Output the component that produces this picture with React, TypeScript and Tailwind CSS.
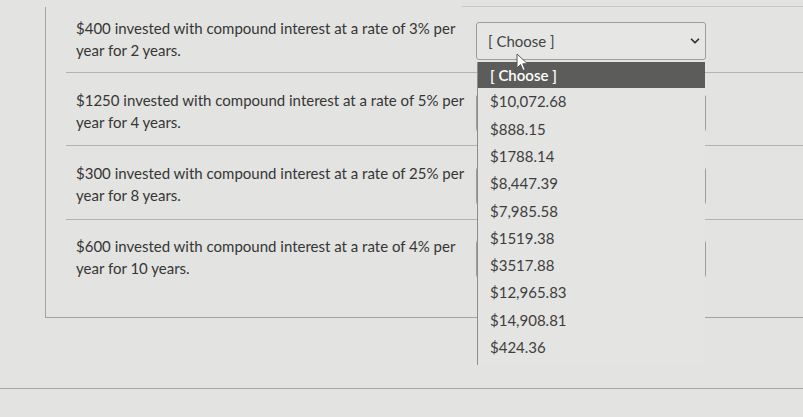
import { ChevronDown } from 'lucide-react';

const rows = [
  { l1: '$400 invested with compound interest at a rate of 3% per', l2: 'year for 2 years.', h: 'h-[66px] pt-[10px]' },
  { l1: '$1250 invested with compound interest at a rate of 5% per', l2: 'year for 4 years.', h: 'h-[73px] pt-[16px]' },
  { l1: '$300 invested with compound interest at a rate of 25% per', l2: 'year for 8 years.', h: 'h-[74px] pt-[16px]' },
  { l1: '$600 invested with compound interest at a rate of 4% per', l2: 'year for 10 years.', h: 'h-[97px] pt-[15px]' },
];

const options = [
  '$10,072.68',
  '$888.15',
  '$1788.14',
  '$8,447.39',
  '$7,985.58',
  '$1519.38',
  '$3517.88',
  '$12,965.83',
  '$14,908.81',
  '$424.36',
];

export default function App() {
  return (
    <div className="relative w-[803px] h-[417px] overflow-hidden bg-[#e3e3e1] text-[#363636] font-['Lato','Liberation_Sans',sans-serif] text-[15px]">
      <div className="h-[7px] ml-[462px] border-b border-[#c9c9c7]" />
      <div className="ml-[45px] border-l border-b border-[#a3a3a1]">
        {rows.map((r, i) => (
          <div key={i} className={`${r.h} ml-[20px] flex items-start ${i < 3 ? 'border-b border-[#b3b3b1]' : ''}`}>
            <div className="w-[410px] pl-[10px] leading-[22px]">
              <div>{r.l1}</div>
              <div>{r.l2}</div>
            </div>
            <div className="mt-[5px] w-[230px] h-[38px] border border-[#9d9d9b] rounded-[3px] flex items-center justify-between pl-[11px] pr-[3px] bg-[#e6e6e4]">
              {i === 0 && <span className="text-[#444]">[ Choose ]</span>}
              {i === 0 && <ChevronDown size={14} strokeWidth={3} className="text-[#333]" />}
            </div>
          </div>
        ))}
      </div>
      <div className="h-[71px] border-b border-[#a8a8a6]" />

      <div className="absolute left-[477px] top-[62px] w-[228px] bg-[#e4e4e2] border-l border-[#8e8e8c] pb-[4px]">
        <div className="h-[26px] bg-[#5c5c5b] text-white font-semibold flex items-center pl-[12px]">[ Choose ]</div>
        {options.map((o) => (
          <div key={o} className="h-[27.3px] flex items-center pl-[12px] text-[#3e3e3e]">
            {o}
          </div>
        ))}
      </div>

      <svg className="absolute left-[516px] top-[53px]" width="14" height="20" viewBox="0 0 14 20">
        <path d="M1 1 L1 15 L4.5 11.5 L7 17.5 L9.2 16.6 L6.8 10.8 L11.5 10.8 Z" fill="#fff" stroke="#555" strokeWidth="1" strokeLinejoin="round" />
      </svg>
    </div>
  );
}
